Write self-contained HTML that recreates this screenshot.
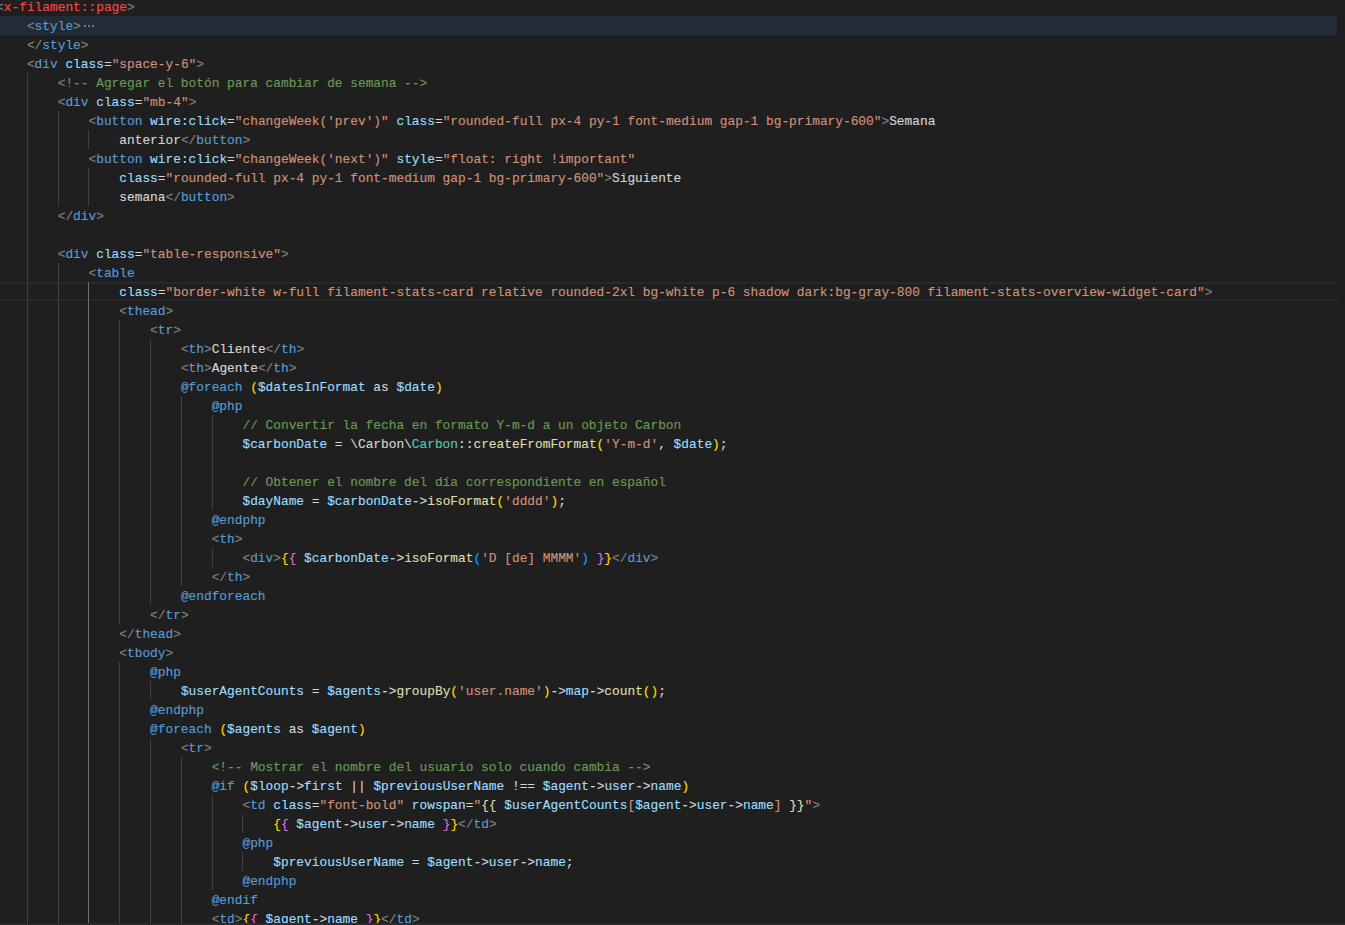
<!DOCTYPE html>
<html><head><meta charset="utf-8"><style>
html,body{margin:0;padding:0;width:1345px;height:925px;overflow:hidden;background:#1f1f1f;}
.ln{position:absolute;left:-3.90px;height:19px;line-height:19px;white-space:pre;font-family:"Liberation Mono",monospace;font-size:12.837px;color:#d4d4d4;-webkit-text-stroke:0.15px currentColor;}
.gd{position:absolute;width:1px;height:19px;background:#404040;}
.ga{background:#707070;}
.g{color:#808080}.t{color:#569cd6}.a{color:#9cdcfe}.s{color:#ce9178}.w{color:#d4d4d4}.c{color:#6a9955}
.r{color:#f44747}.v{color:#9cdcfe}.f{color:#dcdcaa}.k{color:#4ec9b0}.d{color:#569cd6}
.y{color:#ffd700}.p{color:#da70d6}.b{color:#179fff}.e{color:#dcdcaa}
</style></head><body>
<div style="position:absolute;left:0;top:16px;width:1337px;height:19px;background:#212c37"></div>
<div style="position:absolute;left:0;top:282px;width:1337px;height:19px;box-sizing:border-box;border-top:2px solid #282828;border-bottom:2px solid #282828"></div>
<div class="gd" style="left:27px;top:73px"></div><div class="gd" style="left:27px;top:92px"></div><div class="gd" style="left:27px;top:111px"></div><div class="gd" style="left:58px;top:111px"></div><div class="gd" style="left:27px;top:130px"></div><div class="gd" style="left:58px;top:130px"></div><div class="gd" style="left:88px;top:130px"></div><div class="gd" style="left:27px;top:149px"></div><div class="gd" style="left:58px;top:149px"></div><div class="gd" style="left:27px;top:168px"></div><div class="gd" style="left:58px;top:168px"></div><div class="gd" style="left:88px;top:168px"></div><div class="gd" style="left:27px;top:187px"></div><div class="gd" style="left:58px;top:187px"></div><div class="gd" style="left:88px;top:187px"></div><div class="gd" style="left:27px;top:206px"></div><div class="gd" style="left:27px;top:225px"></div><div class="gd" style="left:27px;top:244px"></div><div class="gd" style="left:27px;top:263px"></div><div class="gd" style="left:58px;top:263px"></div><div class="gd" style="left:27px;top:282px"></div><div class="gd" style="left:58px;top:282px"></div><div class="gd ga" style="left:88px;top:282px"></div><div class="gd" style="left:27px;top:301px"></div><div class="gd" style="left:58px;top:301px"></div><div class="gd ga" style="left:88px;top:301px"></div><div class="gd" style="left:27px;top:320px"></div><div class="gd" style="left:58px;top:320px"></div><div class="gd ga" style="left:88px;top:320px"></div><div class="gd" style="left:119px;top:320px"></div><div class="gd" style="left:27px;top:339px"></div><div class="gd" style="left:58px;top:339px"></div><div class="gd ga" style="left:88px;top:339px"></div><div class="gd" style="left:119px;top:339px"></div><div class="gd" style="left:150px;top:339px"></div><div class="gd" style="left:27px;top:358px"></div><div class="gd" style="left:58px;top:358px"></div><div class="gd ga" style="left:88px;top:358px"></div><div class="gd" style="left:119px;top:358px"></div><div class="gd" style="left:150px;top:358px"></div><div class="gd" style="left:27px;top:377px"></div><div class="gd" style="left:58px;top:377px"></div><div class="gd ga" style="left:88px;top:377px"></div><div class="gd" style="left:119px;top:377px"></div><div class="gd" style="left:150px;top:377px"></div><div class="gd" style="left:27px;top:396px"></div><div class="gd" style="left:58px;top:396px"></div><div class="gd ga" style="left:88px;top:396px"></div><div class="gd" style="left:119px;top:396px"></div><div class="gd" style="left:150px;top:396px"></div><div class="gd" style="left:181px;top:396px"></div><div class="gd" style="left:27px;top:415px"></div><div class="gd" style="left:58px;top:415px"></div><div class="gd ga" style="left:88px;top:415px"></div><div class="gd" style="left:119px;top:415px"></div><div class="gd" style="left:150px;top:415px"></div><div class="gd" style="left:181px;top:415px"></div><div class="gd" style="left:212px;top:415px"></div><div class="gd" style="left:27px;top:434px"></div><div class="gd" style="left:58px;top:434px"></div><div class="gd ga" style="left:88px;top:434px"></div><div class="gd" style="left:119px;top:434px"></div><div class="gd" style="left:150px;top:434px"></div><div class="gd" style="left:181px;top:434px"></div><div class="gd" style="left:212px;top:434px"></div><div class="gd" style="left:27px;top:453px"></div><div class="gd" style="left:58px;top:453px"></div><div class="gd ga" style="left:88px;top:453px"></div><div class="gd" style="left:119px;top:453px"></div><div class="gd" style="left:150px;top:453px"></div><div class="gd" style="left:181px;top:453px"></div><div class="gd" style="left:212px;top:453px"></div><div class="gd" style="left:27px;top:472px"></div><div class="gd" style="left:58px;top:472px"></div><div class="gd ga" style="left:88px;top:472px"></div><div class="gd" style="left:119px;top:472px"></div><div class="gd" style="left:150px;top:472px"></div><div class="gd" style="left:181px;top:472px"></div><div class="gd" style="left:212px;top:472px"></div><div class="gd" style="left:27px;top:491px"></div><div class="gd" style="left:58px;top:491px"></div><div class="gd ga" style="left:88px;top:491px"></div><div class="gd" style="left:119px;top:491px"></div><div class="gd" style="left:150px;top:491px"></div><div class="gd" style="left:181px;top:491px"></div><div class="gd" style="left:212px;top:491px"></div><div class="gd" style="left:27px;top:510px"></div><div class="gd" style="left:58px;top:510px"></div><div class="gd ga" style="left:88px;top:510px"></div><div class="gd" style="left:119px;top:510px"></div><div class="gd" style="left:150px;top:510px"></div><div class="gd" style="left:181px;top:510px"></div><div class="gd" style="left:27px;top:529px"></div><div class="gd" style="left:58px;top:529px"></div><div class="gd ga" style="left:88px;top:529px"></div><div class="gd" style="left:119px;top:529px"></div><div class="gd" style="left:150px;top:529px"></div><div class="gd" style="left:181px;top:529px"></div><div class="gd" style="left:27px;top:548px"></div><div class="gd" style="left:58px;top:548px"></div><div class="gd ga" style="left:88px;top:548px"></div><div class="gd" style="left:119px;top:548px"></div><div class="gd" style="left:150px;top:548px"></div><div class="gd" style="left:181px;top:548px"></div><div class="gd" style="left:212px;top:548px"></div><div class="gd" style="left:27px;top:567px"></div><div class="gd" style="left:58px;top:567px"></div><div class="gd ga" style="left:88px;top:567px"></div><div class="gd" style="left:119px;top:567px"></div><div class="gd" style="left:150px;top:567px"></div><div class="gd" style="left:181px;top:567px"></div><div class="gd" style="left:27px;top:586px"></div><div class="gd" style="left:58px;top:586px"></div><div class="gd ga" style="left:88px;top:586px"></div><div class="gd" style="left:119px;top:586px"></div><div class="gd" style="left:150px;top:586px"></div><div class="gd" style="left:27px;top:605px"></div><div class="gd" style="left:58px;top:605px"></div><div class="gd ga" style="left:88px;top:605px"></div><div class="gd" style="left:119px;top:605px"></div><div class="gd" style="left:27px;top:624px"></div><div class="gd" style="left:58px;top:624px"></div><div class="gd ga" style="left:88px;top:624px"></div><div class="gd" style="left:27px;top:643px"></div><div class="gd" style="left:58px;top:643px"></div><div class="gd ga" style="left:88px;top:643px"></div><div class="gd" style="left:27px;top:662px"></div><div class="gd" style="left:58px;top:662px"></div><div class="gd ga" style="left:88px;top:662px"></div><div class="gd" style="left:119px;top:662px"></div><div class="gd" style="left:27px;top:681px"></div><div class="gd" style="left:58px;top:681px"></div><div class="gd ga" style="left:88px;top:681px"></div><div class="gd" style="left:119px;top:681px"></div><div class="gd" style="left:150px;top:681px"></div><div class="gd" style="left:27px;top:700px"></div><div class="gd" style="left:58px;top:700px"></div><div class="gd ga" style="left:88px;top:700px"></div><div class="gd" style="left:119px;top:700px"></div><div class="gd" style="left:27px;top:719px"></div><div class="gd" style="left:58px;top:719px"></div><div class="gd ga" style="left:88px;top:719px"></div><div class="gd" style="left:119px;top:719px"></div><div class="gd" style="left:27px;top:738px"></div><div class="gd" style="left:58px;top:738px"></div><div class="gd ga" style="left:88px;top:738px"></div><div class="gd" style="left:119px;top:738px"></div><div class="gd" style="left:150px;top:738px"></div><div class="gd" style="left:27px;top:757px"></div><div class="gd" style="left:58px;top:757px"></div><div class="gd ga" style="left:88px;top:757px"></div><div class="gd" style="left:119px;top:757px"></div><div class="gd" style="left:150px;top:757px"></div><div class="gd" style="left:181px;top:757px"></div><div class="gd" style="left:27px;top:776px"></div><div class="gd" style="left:58px;top:776px"></div><div class="gd ga" style="left:88px;top:776px"></div><div class="gd" style="left:119px;top:776px"></div><div class="gd" style="left:150px;top:776px"></div><div class="gd" style="left:181px;top:776px"></div><div class="gd" style="left:27px;top:795px"></div><div class="gd" style="left:58px;top:795px"></div><div class="gd ga" style="left:88px;top:795px"></div><div class="gd" style="left:119px;top:795px"></div><div class="gd" style="left:150px;top:795px"></div><div class="gd" style="left:181px;top:795px"></div><div class="gd" style="left:212px;top:795px"></div><div class="gd" style="left:27px;top:814px"></div><div class="gd" style="left:58px;top:814px"></div><div class="gd ga" style="left:88px;top:814px"></div><div class="gd" style="left:119px;top:814px"></div><div class="gd" style="left:150px;top:814px"></div><div class="gd" style="left:181px;top:814px"></div><div class="gd" style="left:212px;top:814px"></div><div class="gd" style="left:242px;top:814px"></div><div class="gd" style="left:27px;top:833px"></div><div class="gd" style="left:58px;top:833px"></div><div class="gd ga" style="left:88px;top:833px"></div><div class="gd" style="left:119px;top:833px"></div><div class="gd" style="left:150px;top:833px"></div><div class="gd" style="left:181px;top:833px"></div><div class="gd" style="left:212px;top:833px"></div><div class="gd" style="left:27px;top:852px"></div><div class="gd" style="left:58px;top:852px"></div><div class="gd ga" style="left:88px;top:852px"></div><div class="gd" style="left:119px;top:852px"></div><div class="gd" style="left:150px;top:852px"></div><div class="gd" style="left:181px;top:852px"></div><div class="gd" style="left:212px;top:852px"></div><div class="gd" style="left:242px;top:852px"></div><div class="gd" style="left:27px;top:871px"></div><div class="gd" style="left:58px;top:871px"></div><div class="gd ga" style="left:88px;top:871px"></div><div class="gd" style="left:119px;top:871px"></div><div class="gd" style="left:150px;top:871px"></div><div class="gd" style="left:181px;top:871px"></div><div class="gd" style="left:212px;top:871px"></div><div class="gd" style="left:27px;top:890px"></div><div class="gd" style="left:58px;top:890px"></div><div class="gd ga" style="left:88px;top:890px"></div><div class="gd" style="left:119px;top:890px"></div><div class="gd" style="left:150px;top:890px"></div><div class="gd" style="left:181px;top:890px"></div><div class="gd" style="left:27px;top:909px"></div><div class="gd" style="left:58px;top:909px"></div><div class="gd ga" style="left:88px;top:909px"></div><div class="gd" style="left:119px;top:909px"></div><div class="gd" style="left:150px;top:909px"></div><div class="gd" style="left:181px;top:909px"></div>
<div class="ln" style="top:-2.00px"><span class="g">&lt;</span><span class="r">x-filament::page</span><span class="g">&gt;</span></div>
<div class="ln" style="top:17.00px">    <span class="g">&lt;</span><span class="t">style</span><span class="g">&gt;</span></div>
<div class="ln" style="top:36.00px">    <span class="g">&lt;/</span><span class="t">style</span><span class="g">&gt;</span></div>
<div class="ln" style="top:55.00px">    <span class="g">&lt;</span><span class="t">div</span><span class="w"> </span><span class="a">class</span><span class="w">=</span><span class="s">&quot;space-y-6&quot;</span><span class="g">&gt;</span></div>
<div class="ln" style="top:74.00px">        <span class="c">&lt;!-- Agregar el botón para cambiar de semana --&gt;</span></div>
<div class="ln" style="top:93.00px">        <span class="g">&lt;</span><span class="t">div</span><span class="w"> </span><span class="a">class</span><span class="w">=</span><span class="s">&quot;mb-4&quot;</span><span class="g">&gt;</span></div>
<div class="ln" style="top:112.00px">            <span class="g">&lt;</span><span class="t">button</span><span class="w"> </span><span class="a">wire:click</span><span class="w">=</span><span class="s">&quot;changeWeek(&#x27;prev&#x27;)&quot;</span><span class="w"> </span><span class="a">class</span><span class="w">=</span><span class="s">&quot;rounded-full px-4 py-1 font-medium gap-1 bg-primary-600&quot;</span><span class="g">&gt;</span><span class="w">Semana</span></div>
<div class="ln" style="top:131.00px">                <span class="w">anterior</span><span class="g">&lt;/</span><span class="t">button</span><span class="g">&gt;</span></div>
<div class="ln" style="top:150.00px">            <span class="g">&lt;</span><span class="t">button</span><span class="w"> </span><span class="a">wire:click</span><span class="w">=</span><span class="s">&quot;changeWeek(&#x27;next&#x27;)&quot;</span><span class="w"> </span><span class="a">style</span><span class="w">=</span><span class="s">&quot;float: right !important&quot;</span></div>
<div class="ln" style="top:169.00px">                <span class="a">class</span><span class="w">=</span><span class="s">&quot;rounded-full px-4 py-1 font-medium gap-1 bg-primary-600&quot;</span><span class="g">&gt;</span><span class="w">Siguiente</span></div>
<div class="ln" style="top:188.00px">                <span class="w">semana</span><span class="g">&lt;/</span><span class="t">button</span><span class="g">&gt;</span></div>
<div class="ln" style="top:207.00px">        <span class="g">&lt;/</span><span class="t">div</span><span class="g">&gt;</span></div>
<div class="ln" style="top:226.00px"></div>
<div class="ln" style="top:245.00px">        <span class="g">&lt;</span><span class="t">div</span><span class="w"> </span><span class="a">class</span><span class="w">=</span><span class="s">&quot;table-responsive&quot;</span><span class="g">&gt;</span></div>
<div class="ln" style="top:264.00px">            <span class="g">&lt;</span><span class="t">table</span></div>
<div class="ln" style="top:283.00px">                <span class="a">class</span><span class="w">=</span><span class="s">&quot;border-white w-full filament-stats-card relative rounded-2xl bg-white p-6 shadow dark:bg-gray-800 filament-stats-overview-widget-card&quot;</span><span class="g">&gt;</span></div>
<div class="ln" style="top:302.00px">                <span class="g">&lt;</span><span class="t">thead</span><span class="g">&gt;</span></div>
<div class="ln" style="top:321.00px">                    <span class="g">&lt;</span><span class="t">tr</span><span class="g">&gt;</span></div>
<div class="ln" style="top:340.00px">                        <span class="g">&lt;</span><span class="t">th</span><span class="g">&gt;</span><span class="w">Cliente</span><span class="g">&lt;/</span><span class="t">th</span><span class="g">&gt;</span></div>
<div class="ln" style="top:359.00px">                        <span class="g">&lt;</span><span class="t">th</span><span class="g">&gt;</span><span class="w">Agente</span><span class="g">&lt;/</span><span class="t">th</span><span class="g">&gt;</span></div>
<div class="ln" style="top:378.00px">                        <span class="d">@foreach</span><span class="w"> </span><span class="y">(</span><span class="v">$datesInFormat</span><span class="w"> as </span><span class="v">$date</span><span class="y">)</span></div>
<div class="ln" style="top:397.00px">                            <span class="d">@php</span></div>
<div class="ln" style="top:416.00px">                                <span class="c">// Convertir la fecha en formato Y-m-d a un objeto Carbon</span></div>
<div class="ln" style="top:435.00px">                                <span class="v">$carbonDate</span><span class="w"> = \Carbon\</span><span class="k">Carbon</span><span class="w">::</span><span class="f">createFromFormat</span><span class="y">(</span><span class="s">&#x27;Y-m-d&#x27;</span><span class="w">, </span><span class="v">$date</span><span class="y">)</span><span class="w">;</span></div>
<div class="ln" style="top:454.00px"></div>
<div class="ln" style="top:473.00px">                                <span class="c">// Obtener el nombre del día correspondiente en español</span></div>
<div class="ln" style="top:492.00px">                                <span class="v">$dayName</span><span class="w"> = </span><span class="v">$carbonDate</span><span class="w">-&gt;</span><span class="f">isoFormat</span><span class="y">(</span><span class="s">&#x27;dddd&#x27;</span><span class="y">)</span><span class="w">;</span></div>
<div class="ln" style="top:511.00px">                            <span class="d">@endphp</span></div>
<div class="ln" style="top:530.00px">                            <span class="g">&lt;</span><span class="t">th</span><span class="g">&gt;</span></div>
<div class="ln" style="top:549.00px">                                <span class="g">&lt;</span><span class="t">div</span><span class="g">&gt;</span><span class="y">{</span><span class="p">{</span><span class="w"> </span><span class="v">$carbonDate</span><span class="w">-&gt;</span><span class="f">isoFormat</span><span class="b">(</span><span class="s">&#x27;D [de] MMMM&#x27;</span><span class="b">)</span><span class="w"> </span><span class="p">}</span><span class="y">}</span><span class="g">&lt;/</span><span class="t">div</span><span class="g">&gt;</span></div>
<div class="ln" style="top:568.00px">                            <span class="g">&lt;/</span><span class="t">th</span><span class="g">&gt;</span></div>
<div class="ln" style="top:587.00px">                        <span class="d">@endforeach</span></div>
<div class="ln" style="top:606.00px">                    <span class="g">&lt;/</span><span class="t">tr</span><span class="g">&gt;</span></div>
<div class="ln" style="top:625.00px">                <span class="g">&lt;/</span><span class="t">thead</span><span class="g">&gt;</span></div>
<div class="ln" style="top:644.00px">                <span class="g">&lt;</span><span class="t">tbody</span><span class="g">&gt;</span></div>
<div class="ln" style="top:663.00px">                    <span class="d">@php</span></div>
<div class="ln" style="top:682.00px">                        <span class="v">$userAgentCounts</span><span class="w"> = </span><span class="v">$agents</span><span class="w">-&gt;</span><span class="f">groupBy</span><span class="y">(</span><span class="s">&#x27;user.name&#x27;</span><span class="y">)</span><span class="w">-&gt;</span><span class="v">map</span><span class="w">-&gt;</span><span class="f">count</span><span class="y">()</span><span class="w">;</span></div>
<div class="ln" style="top:701.00px">                    <span class="d">@endphp</span></div>
<div class="ln" style="top:720.00px">                    <span class="d">@foreach</span><span class="w"> </span><span class="y">(</span><span class="v">$agents</span><span class="w"> as </span><span class="v">$agent</span><span class="y">)</span></div>
<div class="ln" style="top:739.00px">                        <span class="g">&lt;</span><span class="t">tr</span><span class="g">&gt;</span></div>
<div class="ln" style="top:758.00px">                            <span class="c">&lt;!-- Mostrar el nombre del usuario solo cuando cambia --&gt;</span></div>
<div class="ln" style="top:777.00px">                            <span class="d">@if</span><span class="w"> </span><span class="y">(</span><span class="v">$loop</span><span class="w">-&gt;</span><span class="v">first</span><span class="w"> || </span><span class="v">$previousUserName</span><span class="w"> !== </span><span class="v">$agent</span><span class="w">-&gt;</span><span class="v">user</span><span class="w">-&gt;</span><span class="v">name</span><span class="y">)</span></div>
<div class="ln" style="top:796.00px">                                <span class="g">&lt;</span><span class="t">td</span><span class="w"> </span><span class="a">class</span><span class="w">=</span><span class="s">&quot;font-bold&quot;</span><span class="w"> </span><span class="a">rowspan</span><span class="w">=</span><span class="s">&quot;</span><span class="e">{{</span><span class="w"> </span><span class="v">$userAgentCounts</span><span class="s">[</span><span class="v">$agent</span><span class="w">-&gt;</span><span class="v">user</span><span class="w">-&gt;</span><span class="v">name</span><span class="s">]</span><span class="w"> </span><span class="e">}}</span><span class="s">&quot;</span><span class="g">&gt;</span></div>
<div class="ln" style="top:815.00px">                                    <span class="y">{</span><span class="p">{</span><span class="w"> </span><span class="v">$agent</span><span class="w">-&gt;</span><span class="v">user</span><span class="w">-&gt;</span><span class="v">name</span><span class="w"> </span><span class="p">}</span><span class="y">}</span><span class="g">&lt;/</span><span class="t">td</span><span class="g">&gt;</span></div>
<div class="ln" style="top:834.00px">                                <span class="d">@php</span></div>
<div class="ln" style="top:853.00px">                                    <span class="v">$previousUserName</span><span class="w"> = </span><span class="v">$agent</span><span class="w">-&gt;</span><span class="v">user</span><span class="w">-&gt;</span><span class="v">name</span><span class="w">;</span></div>
<div class="ln" style="top:872.00px">                                <span class="d">@endphp</span></div>
<div class="ln" style="top:891.00px">                            <span class="d">@endif</span></div>
<div class="ln" style="top:910.00px">                            <span class="g">&lt;</span><span class="t">td</span><span class="g">&gt;</span><span class="y">{</span><span class="p">{</span><span class="w"> </span><span class="v">$agent</span><span class="w">-&gt;</span><span class="v">name</span><span class="w"> </span><span class="p">}</span><span class="y">}</span><span class="g">&lt;/</span><span class="t">td</span><span class="g">&gt;</span></div>
<div style="position:absolute;left:84px;top:25px;width:2px;height:2px;background:#727579"></div><div style="position:absolute;left:88px;top:25px;width:2px;height:2px;background:#727579"></div><div style="position:absolute;left:92px;top:25px;width:2px;height:2px;background:#727579"></div>
<div style="position:absolute;left:0;top:923px;width:1345px;height:2px;background:#2b2b2b"></div>
</body></html>
